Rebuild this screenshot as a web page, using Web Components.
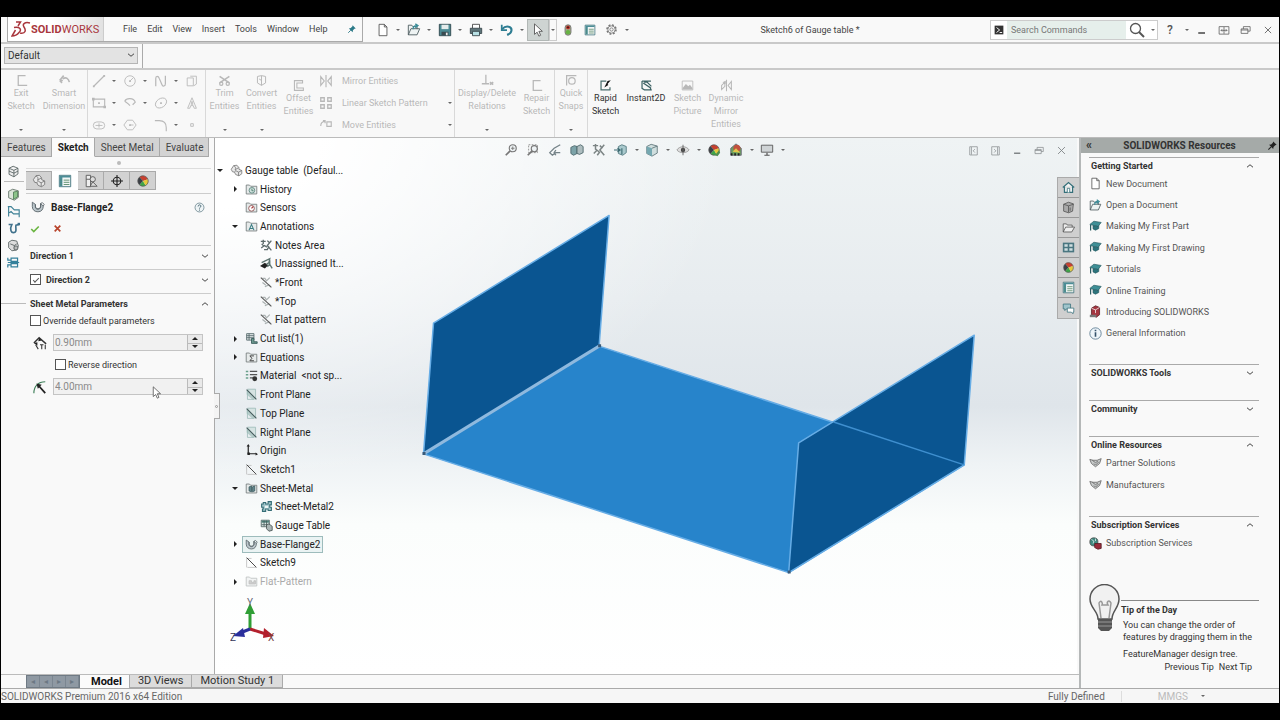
<!DOCTYPE html>
<html lang="en">
<head>
<meta charset="utf-8">
<title>SOLIDWORKS Premium 2016</title>
<style>
    html, body {
        height: 100%;
        margin: 0;
        background: #000;
        font-family: Roboto, "Open Sans", sans-serif;
        font-size: 9px;
        color: #444;
    }
</style>
</head>
<body>
<sw-app></sw-app>

<script>
const RESET = `
    :host { box-sizing: border-box; }
    *, *::before, *::after { box-sizing: border-box; }
    button, input, select { font: inherit; color: inherit; margin: 0; }
    button { background: none; border: 0; padding: 0; cursor: default; }
    a { color: inherit; text-decoration: none; }
    ul { list-style: none; margin: 0; padding: 0; }
    h2, h3, p { margin: 0; font-size: inherit; }
`;

const BALL = `
    <circle cx="8" cy="8" r="6" fill="#ddd"/>
    <path d="M8 8L4 3.5A6 6 0 0 1 13.6 6z" fill="#c8402f"/>
    <path d="M8 8L4 3.5A6 6 0 0 0 4 12.5z" fill="#3b3f45"/>
    <path d="M8 8L4 12.5A6 6 0 0 0 11 13.2z" fill="#3fa548"/>
    <path d="M8 8l5.6-2A6 6 0 0 1 11 13.2z" fill="#e7c93b"/>
    <circle cx="8" cy="8" r="6" fill="none" stroke="#555" stroke-width=".8"/>`;
const FOLDER = `<path d="M1.5 13.5v-11h4l1.500 1.500h7.500v9.500z" fill="#e6eaea" stroke="#707878"/>`;
const PART = `
    <path d="M1.500 6.500l3-4.500 4-.5 2.500 3v2l3.500 1.500v4l-3.500 2.500-4-1.500-1.500-3-2.500-.5z" fill="#e8e8e8" stroke="#777"/>
    <path d="M4.500 2c2 1 3 3 2 5l4-2.500M6.500 7c1 1 0 2-1 3M14.500 8l-4 2-3-1.500M10.500 10v4.500" fill="none" stroke="#777"/>`;
const FLANGE = `
    <path d="M1.500 2.500v5c0 4 3 6 6.500 6 4 0 6-3 6-6.500l-3-3v3c0 2-1.500 3-3 3s-3-1-3-3V5z" fill="#bcc7cc" stroke="#596469"/>
    <path d="M5 5v3c0 3 5 4 6 0V4M11 4l2-1 2 2-1 2" fill="none" stroke="#596469"/>`;
const GRAD = `
    <path d="M1 5.500l5-4 9 1.500-4 5z" fill="#3f8f96" stroke="#20555c" stroke-width=".8"/>
    <path d="M5 7v4l3 1.500 4-2V7l-1 1z" fill="#2c747c" stroke="#20555c" stroke-width=".8"/>
    <path d="M2 6v7" stroke="#20555c" stroke-width="1.400"/>`;
const PLANE = `<path d="M2 2h2l9 9v3H9L2 8z" fill="#b5ccca"/><path d="M3 1.500h10v12" fill="#d5e3e2" stroke="#9dbab8"/><path d="M3 4v10h8" fill="none" stroke="#9dbab8"/><path d="M2 2l12 12" stroke="#44595b" stroke-width="1.300"/>`;
const VIEW = `<path d="M3 3h3l2 3 4-4M3 8l4 3M6 13l5-2 2 2" fill="none" stroke="#aab1b1" stroke-width="1.500"/><path d="M1 2l13 12" stroke="#555" stroke-width="1.300"/>`;
const SHAKE = `<path d="M1 3l4 1h5l5-2-2 6-5 4-5-4z" fill="#c9cccc" stroke="#666"/><path d="M4 4l4 3 3-2M6 8l2 2 4-4" fill="none" stroke="#666"/>`;

const ICONS = {
    pin: `<path d="M9 2l5 5-2 .5-2.500 2.500-.5 3L3 7l3-.5L8.500 4z" fill="currentColor"/><path d="M6 10l-4 4" stroke="currentColor" stroke-width="1.500"/>`,
    new: `<path d="M3.500 1.500h6l3 3v10h-9z M9.500 1.500v3h3" fill="#fff" stroke="#555"/>`,
    open: `<path d="M1.500 13.500v-11h4l1 1.500h5v3M1.500 13.500l3-7h10l-3 7z" fill="#eef3f3" stroke="#4c5a5e"/><path d="M7 7c0-3 2-4 4-4M9.500 1l3 2-3 2.500" fill="none" stroke="#3b8c98" stroke-width="1.500"/>`,
    save: `<path d="M1.500 1.500h13v13h-13z" fill="#4a8a93" stroke="#2d4549"/><path d="M4 2h8v5H4z" fill="#e4ecec"/><path d="M4 10h8v4H4z" fill="#394b50"/><path d="M9 11h2v3H9z" fill="#eee"/>`,
    print: `<path d="M4 6V1.500h8V6" fill="#fff" stroke="#444"/><path d="M1.500 6h13v6h-13z" fill="#5e757a" stroke="#37464a"/><path d="M4 9.500h8v5H4z" fill="#b8e0e4" stroke="#37464a"/>`,
    undo: `<path d="M2 2v6h6" fill="none" stroke="#2e7d92" stroke-width="2"/><path d="M2.500 7C7 2 14 4 13 9c-.5 3-3 4-5 4.500" fill="none" stroke="#2e7d92" stroke-width="2.400"/>`,
    cursor: `<path d="M4 1v12l3-2.500L9 15l2-1-2-4.500h4z" fill="#fff" stroke="#555"/>`,
    traffic: `<rect x="4" y="1" width="8" height="14" rx="4" fill="#a5a78c" stroke="#666"/><circle cx="8" cy="4.500" r="2.500" fill="#c33128"/><path d="M6.500 3.500h3v2h-3z" fill="#511"/><circle cx="8" cy="11" r="3" fill="#67b344"/>`,
    list: `<path d="M1.500 1.500h13v13h-13z" fill="#f2f6f6" stroke="#3a6f78"/><path d="M2 2h12v2H2zM2 4h3v10H2z" fill="#4b8d96"/><path d="M6.500 7H13M6.500 9.500H13M6.500 12H13M3 7h1M3 9.500h1M3 12h1" stroke="#586"/>`,
    gear: `<circle cx="8" cy="8" r="5.500" fill="none" stroke="#777" stroke-width="2" stroke-dasharray="2.400 1.900"/><circle cx="8" cy="8" r="4.500" fill="#f7f7f7" stroke="#777"/><circle cx="8" cy="8" r="2" fill="none" stroke="#777"/>`,
    prompt: `<path d="M1 1h14v14H1z" fill="#333"/><path d="M4 4l5 4-5 4M9 12h4" fill="none" stroke="#fff" stroke-width="1.500"/>`,
    search: `<circle cx="6.500" cy="6.500" r="5" fill="none" stroke="#555" stroke-width="1.300"/><path d="M10 10l5 5" stroke="#555" stroke-width="2"/>`,
    min: `<path d="M3 12h9" stroke="currentColor" stroke-width="2.200"/>`,
    span: `<path d="M1.500 3.500h13v10h-13zM8 4v9M4 8.500h8M5.500 7L4 8.500 5.500 10M10.500 7L12 8.500 10.500 10" fill="none" stroke="currentColor"/>`,
    restore: `<path d="M1.500 6.500h9v6h-9zM4.500 6.500v-3h9v6h-3M1.500 8h9" fill="none" stroke="currentColor"/>`,
    close: `<path d="M3 3l10 10M13 3L3 13" stroke="currentColor" stroke-width="1.300"/>`,
    paneL: `<path d="M2.500 2.500h11v12h-11z M5 3v11 M10 6l-2.500 2.500L10 11" fill="none" stroke="currentColor"/>`,
    paneR: `<path d="M2.500 2.500h11v12h-11z M11 3v11 M6 6l2.500 2.500L6 11" fill="none" stroke="currentColor"/>`,
    up: `<path d="M2 10.500l6-5 6 5" fill="none" stroke="#444" stroke-width="2"/>`,
    down: `<path d="M2 5.500l6 5 6-5" fill="none" stroke="#444" stroke-width="2"/>`,
    // sketch ribbon
    exitSketch: `<path d="M13 2H4v12h11M4 8V2" fill="none" stroke="currentColor" stroke-width="1.600"/>`,
    dimension: `<path d="M2 8l5-6M2 8l3 3M6 6c4-3 7 0 8 4M2 8h4" fill="none" stroke="currentColor" stroke-width="2"/>`,
    line: `<path d="M2 14L14 2" stroke="currentColor" stroke-width="1.400"/><path d="M1 13h2v2H1zM13 1h2v2h-2z" fill="currentColor"/>`,
    circle: `<circle cx="8" cy="8" r="6" fill="none" stroke="currentColor"/><path d="M7 7h2v2H7z" fill="currentColor"/><path d="M8 8l4-4" stroke="currentColor"/>`,
    spline: `<path d="M2 14V5c0-3 3-3 4 0l3 7c1 3 4 2 4-1V2" fill="none" stroke="currentColor" stroke-width="1.400"/>`,
    plane: `<path d="M2.500 4.500h7v9h-7zM6 2.500h7v9l-3 2" fill="none" stroke="currentColor"/>`,
    rect: `<path d="M1.500 3.500h13v9h-13z" fill="none" stroke="currentColor" stroke-width="1.300"/><path d="M7 7h2v2H7zM0 2h3v3H0zM13 11h3v3h-3z" fill="currentColor"/>`,
    arc: `<path d="M2 6c2-4 10-4 12 1l-3 3M2 6l4 3 2 2" fill="none" stroke="currentColor" stroke-width="1.400"/>`,
    ellipse: `<ellipse cx="8" cy="8" rx="7" ry="5" transform="rotate(-35 8 8)" fill="none" stroke="currentColor"/><path d="M7 7h2v2H7z" fill="currentColor"/>`,
    letter: `<path d="M3 14L8 2l5 12h-2.500L9.500 11h-3L5.500 14zM8 6L7 9.500h2z" fill="none" stroke="currentColor"/>`,
    slot: `<rect x="1.500" y="4.500" width="13" height="8" rx="4" fill="none" stroke="currentColor"/><path d="M4 8.500h8M8 6v5" stroke="currentColor"/>`,
    polygon: `<path d="M5 2.500h6l4 5.500-4 5.500H5L1 8z" fill="none" stroke="currentColor"/><path d="M7 7h2v2H7z" fill="currentColor"/><path d="M8 8h4" stroke="currentColor"/>`,
    fillet: `<path d="M1 3h5c5 0 8 3 8 8v4" fill="none" stroke="currentColor" stroke-width="1.300"/>`,
    point: `<path d="M6.500 6.500h3v3h-3z" fill="none" stroke="currentColor"/>`,
    trim: `<path d="M2 3l12 8M14 3L2 11" stroke="currentColor" stroke-width="2"/><circle cx="4" cy="12" r="2" fill="none" stroke="currentColor" stroke-width="1.500"/><circle cx="12" cy="12" r="2" fill="none" stroke="currentColor" stroke-width="1.500"/>`,
    convert: `<path d="M3 3l5-1 5 1v8l-5 3-5-3zM8 2v12M5 6l3 2" fill="none" stroke="currentColor" stroke-width="1.200"/>`,
    offset: `<path d="M13 2H3v12h11v-3H6V5h7z" fill="none" stroke="currentColor" stroke-width="1.300"/>`,
    mirror: `<path d="M8 1v14M2 3v10l4-5zM14 3v10l-4-5z" fill="none" stroke="currentColor" stroke-width="1.300"/>`,
    pattern: `<path d="M2 2h4v4H2zM10 2h4v4h-4zM2 10h4v4H2zM10 10h4v4h-4z" fill="none" stroke="currentColor" stroke-width="1.500"/>`,
    move: `<path d="M2 9c0-3 2-5 5-5M4.500 3H7v3M9 4.500h5v5H9z" fill="none" stroke="currentColor" stroke-width="1.300"/>`,
    relations: `<path d="M6 1v11M1 12h9" stroke="currentColor" stroke-width="1.600"/><path d="M11 10l4 3M11 13l4-3" stroke="currentColor" stroke-width="2"/>`,
    snaps: `<path d="M2 14V2h12" fill="none" stroke="currentColor" stroke-width="1.500"/><circle cx="8.500" cy="8.500" r="4" fill="none" stroke="currentColor" stroke-width="1.500"/>`,
    rapid: `<path d="M9 2.500H2.500v11h11V10" fill="none" stroke="#4a6d6d" stroke-width="1.500"/><path d="M14.500 1.500l-4 1-4 8 5-3-1-1.500z" fill="#111"/>`,
    instant: `<path d="M2.500 2.500h11M2.500 2.500v9l3 2h9M4 5l9 6v3M5 4h4l5 5" fill="none" stroke="#3d6264" stroke-width="1.500"/>`,
    picture: `<path d="M1.500 2.500h13v11h-13z" fill="none" stroke="currentColor"/><path d="M2 11l4-5 3 3 2-2 3 4v2H2z" fill="currentColor"/>`,
    dynamic: `<path d="M8 1v14M14 3v10l-4-5zM2 13V8l4-4v5z" fill="none" stroke="currentColor" stroke-width="1.300"/><path d="M3 4l4-2v4z" fill="currentColor"/>`,
    // property manager
    part: PART,
    config: `<path d="M2.500 1.500h5v13h-5zM2.500 6h5" fill="#eee" stroke="#555"/><circle cx="10" cy="6" r="3" fill="#ddd" stroke="#555"/><path d="M7 14l3-5 5 5z" fill="#ddd" stroke="#555"/>`,
    target: `<circle cx="8" cy="8" r="5" fill="none" stroke="#222" stroke-width="1.500"/><path d="M8 0v16M0 8h16" stroke="#222" stroke-width="1.500"/>`,
    ball: BALL,
    flange: FLANGE,
    help: `<circle cx="8" cy="8" r="6.500" fill="#eef4f6" stroke="#55727c"/><path d="M6 6.500c0-3 4-3 4-.5 0 2-2 1.500-2 3.500M8 11v1.500" fill="none" stroke="#3c5c68" stroke-width="1.300"/>`,
    ok: `<path d="M2 8l4 4 8-8" fill="none" stroke="#6ab541" stroke-width="2.600"/>`,
    cancel: `<path d="M3 3l10 10M13 3L3 13" stroke="#b8442c" stroke-width="3"/>`,
    thickness: `<path d="M1 8l6-6 8 7" fill="none" stroke="#333" stroke-width="1.600"/><path d="M1 8l4-1v4zM7 2l-1 4 4-1z" fill="#222"/><path d="M3 10l3 5M8 10h4M10 10v5M14 10v5" stroke="#333" stroke-width="1.200"/>`,
    radius: `<path d="M1 15C1 7 6 2 14 2" fill="none" stroke="#3d7f58" stroke-width="1.300"/><path d="M14 15L6 6" stroke="#222" stroke-width="2"/><path d="M4 4l6 1.500L5.500 10z" fill="#222"/>`,
    solid: `<path d="M2.500 4l5-2.500 6 2.500v7l-5 3.500-6-3z M2.500 4l6 2.500 5-2.500M8.500 6.500v8M2.500 7.500l6 2.500 5-2.500" fill="#ececec" stroke="#4f5b5b"/>`,
    boss: `<path d="M2 4l5-2.500 7 2v8L9 15l-7-3z" fill="#dbe5da" stroke="#5b6b60"/><path d="M8 5l5-1v7l-5 3z" fill="#8cc48a" stroke="#4b7a52"/>`,
    sheet: `<path d="M2 14V2M1 2h4l4 4h6v6M2 10l3-2 3 3h7M15 12v3" fill="none" stroke="#3f8196" stroke-width="1.400"/>`,
    curve: `<path d="M2 3h4c-3 6-1 11 3 10s1-6 2-9l4-1" fill="none" stroke="#40728c" stroke-width="2"/><path d="M13 1h3v3h-3z" fill="#40728c"/>`,
    mold: `<path d="M2 4l4-2.500 6 1 2 6-2 5-6 1-4-4z" fill="#ddd" stroke="#4f5959"/><path d="M4 6l5 2 3-2M9 8v5" fill="none" stroke="#4f5959"/><circle cx="11" cy="11" r="2.500" fill="#bbb" stroke="#4f5959"/>`,
    weld: `<path d="M1 2v3h4M5 2.500h8v4H5zM5 9.500h8v4H5zM1 8h14M1 14v-3h4" fill="none" stroke="#34809b" stroke-width="1.500"/>`,
    // feature tree
    history: FOLDER + `<circle cx="8.500" cy="9" r="3.500" fill="#cfe0dc" stroke="#55817a"/><path d="M8.500 7v2.500h2" fill="none" stroke="#476"/>`,
    sensors: FOLDER + `<circle cx="8" cy="9" r="3.500" fill="#fff" stroke="#844"/><path d="M8 9l2-2" stroke="#a33" stroke-width="1.500"/>`,
    annotations: FOLDER + `<path d="M5 12.500L8 5.500l3 7M6 10.500h4" fill="none" stroke="#3e7f86" stroke-width="1.300"/>`,
    notes: `<path d="M1 3h6M4 1v5M2 6l3 3M1.500 11l4-3 3 2M14 2l-5 6 5 6M5 13h4l2-4M9 2l3 3" fill="none" stroke="#5e6c6c" stroke-width="1.600"/>`,
    unassigned: `<path d="M0 11l6-4 4 3-4 4z" fill="#222"/><path d="M2 7l10-5-1 5-3 2M12 4v5l3 5M9 12l3-3" fill="none" stroke="#5f7672" stroke-width="1.700"/>`,
    view: VIEW,
    cutlist: `<path d="M2 2h9v8H2z" fill="#dfe6e6" stroke="#4f6466"/><path d="M2 4.500h9M5 2v8M2 7h9" stroke="#4f6466"/><path d="M8 8v6h7v-2h-4V8z" fill="#6c9b8f" stroke="#355"/>`,
    equations: FOLDER + `<path d="M11 6H6l2.500 3L6 12h5" fill="none" stroke="#444" stroke-width="1.200"/>`,
    material: `<path d="M6 3h9M6 7h9M6 11h4" stroke="#555" stroke-width="1.500"/><path d="M1 2h3v2H1zM1 6h3v2H1zM1 10h3v2H1z" fill="#6aa08c"/><circle cx="12" cy="12" r="3" fill="#333"/>`,
    planeRef: PLANE,
    origin: `<path d="M4 2v10h10" fill="none" stroke="#222" stroke-width="1.500"/><path d="M2 3l2-3 2 3zM3 10.500h3v3H3zM13 10.500l3 2-3 1.500z" fill="#222"/>`,
    sketch: `<path d="M2 14V3h6" fill="none" stroke="#bbb"/><path d="M2 2l12 12" stroke="#444" stroke-width="1.200"/><path d="M3 14h11" fill="none" stroke="#bbb"/>`,
    sheetFolder: FOLDER + `<path d="M5 6l3-1v7l-3-1zM9 6l3-1v6l-3 1z" fill="#62868c" stroke="#3d5d61"/>`,
    sheetMetal: `<path d="M4 3h3v2h3V2h4v4h-2v3h2v4h-4v-2H7v3H3v-3h1V9H2V5h2z" fill="#9fc4c9" stroke="#356d76" stroke-width="1.300"/><path d="M6 7h4v3H6z" fill="#eef5f5"/>`,
    gauge: `<path d="M1.500 1.500h10v8h-10z" fill="#dce6e4" stroke="#4a5e5e"/><path d="M2 2h9v2.500H2z" fill="#4c7f78"/><path d="M5 2v7M8 2v7M2 7h9" stroke="#4a5e5e"/><path d="M8 7l3-1 4 3v5l-4 1-3-3z" fill="#aab5b5" stroke="#454f4f"/>`,
    flat: `<g opacity=".45">${FOLDER}<path d="M5 7h3v2h3V7h2v4H5z" fill="#999" stroke="#777"/></g>`,
    // heads-up view toolbar
    zoomFit: `<circle cx="10" cy="6" r="4" fill="#edf2f4" stroke="#777" stroke-width="1.300"/><path d="M7 9l-5 5" stroke="#777" stroke-width="2"/><path d="M8 6h4M10 4v4" stroke="#777"/>`,
    zoomArea: `<path d="M3 2h10v9H3z" fill="none" stroke="#888" stroke-dasharray="2 1.500"/><circle cx="9.500" cy="6.500" r="3.500" fill="#edf2f4" stroke="#777" stroke-width="1.300"/><path d="M7 9l-5 5" stroke="#777" stroke-width="2"/>`,
    prev: `<path d="M14 2L7 6l-5 5 3 3 4-3h5M9 8l-2 3 2 3" fill="none" stroke="#758388" stroke-width="1.500"/>`,
    section: `<path d="M1 5l4-2 3 1v8l-4 2-3-2z" fill="#7ca3a8" stroke="#4c666a"/><path d="M8 4l4-2 3 2v7l-4 2-3-1z" fill="#aebdbf" stroke="#4c666a"/>`,
    sectionView: `<path d="M1 3h6M4 1v6l4 3M2 12l4-4M14 2L9 8l5 6M6 14l3-4M9 3l3 3" fill="none" stroke="#7b8484" stroke-width="1.700"/>`,
    orient: `<path d="M5 4l4-2 5 2v7l-4 3-5-2z" fill="#a9c9cd" stroke="#557a80"/><path d="M0 8h6M4 6l3 2-3 2M9 6v7" fill="none" stroke="#3d6b73" stroke-width="1.300"/>`,
    cube: `<path d="M2 4l5-2.500 7 2v8L8 15l-6-3z" fill="#cfdede" stroke="#61777b"/><path d="M2 4l6 2v9l-6-3z" fill="#75a8b1"/><path d="M8 6l6-2.500" stroke="#61777b"/>`,
    eye: `<path d="M1 8c3-5 11-5 14 0-3 4-11 4-14 0z" fill="#ddd" stroke="#999"/><circle cx="8" cy="8" r="2.500" fill="#444"/><path d="M8 2v12" stroke="#666"/>`,
    appearance: BALL + `<path d="M9 14l5-6 1 3-3 4z" fill="#518f4e"/>`,
    scene: `<path d="M2 14V6l6-5 6 5v8z" fill="#6a9f5e" stroke="#667"/><circle cx="9" cy="6" r="4" fill="#c2503e"/><path d="M4 10l4-4 5 5" fill="#e1c54b"/><path d="M2 13h12" stroke="#222" stroke-width="2.500" stroke-dasharray="2 2"/>`,
    monitor: `<path d="M1.500 2.500h13v8h-13z" fill="#cfd4d6" stroke="#555"/><path d="M8 11v3M5 14h6" stroke="#555" stroke-width="1.400"/>`,
    // task pane
    home: `<path d="M1 8l7-6 7 6M3 7v7h10V7" fill="#f4f4f4" stroke="#35707a" stroke-width="1.500"/><path d="M6.500 14V9h3v5" fill="#fff" stroke="#35707a"/>`,
    library: `<path d="M2 4l6-2.500 6 2-1 9-5 2-6-2z" fill="#aaa" stroke="#555"/><path d="M8 6l6-2M8 6v8M2 4l6 2M10 8v4" stroke="#555"/>`,
    folder: `<path d="M1.500 13.500v-10h4l1 1.500h6v2.500M1.500 13.500l3-6h11l-3.500 6z" fill="#eee" stroke="#555"/>`,
    palette: `<path d="M1 2h14v12H1z" fill="#4a7680"/><path d="M3 4h4v3H3zM9 4h4v3H9zM3 9h4v3H3zM9 9h4v3H9z" fill="#cfdee0"/>`,
    forum: `<path d="M1.500 2.500h9v6h-5l-2 2v-2h-2z" fill="#9fc4cb" stroke="#3d747f"/><path d="M6.500 7.500h8v5h-1v2l-2-2h-5z" fill="#fff" stroke="#3d747f"/>`,
    grad: GRAD,
    intro: `<path d="M3 4l5-3 5 2v9l-4 3-6-3z" fill="#a53540" stroke="#5d2228"/><path d="M3 4l5 2 5-3M8 6v4" fill="none" stroke="#eee"/><path d="M1 12h8v3H1z" fill="#777"/>`,
    info: `<circle cx="8" cy="8" r="7" fill="#eef5fa" stroke="#52748b"/><path d="M8 6.500V12M8 3.500v1.800" stroke="#35526b" stroke-width="2"/>`,
    shake: SHAKE,
    subscription: `<circle cx="6" cy="6" r="5" fill="#3f8a80" stroke="#555"/><path d="M3 3l3 2-1 3M8 2v3" stroke="#dfe8e8" fill="none"/><path d="M7 8h8v6l-4 1-4-2z" fill="#992b3a" stroke="#541c24"/>`
};

class SwIcon extends HTMLElement {
    connectedCallback() {
        if (this.shadowRoot) return;
        const size = this.getAttribute('size') || 14;
        this.attachShadow({ mode: 'open' }).innerHTML = `
            <style>
                :host { display: inline-block; flex: none; width: ${size}px; height: ${size}px; }
                svg { display: block; width: 100%; height: 100%; }
            </style>
            <svg viewBox="0 0 16 16" aria-hidden="true">${ICONS[this.getAttribute('name')] || ''}</svg>`;
    }
}
customElements.define('sw-icon', SwIcon);

const define = (tag, render) => customElements.define(tag, class extends HTMLElement {
    connectedCallback() {
        if (this.shadowRoot) return;
        this.attachShadow({ mode: 'open' }).innerHTML = `<style>${RESET}</style>` + render(this);
    }
});

const icon = (name, size) => `<sw-icon name="${name}" size="${size || 14}"></sw-icon>`;

// small drop-down marker beside an icon
define('sw-caret', () => `
    <style>
        :host { display: inline-grid; place-items: center; flex: none; width: 9px; }
        i { border: 2px solid transparent; border-top-color: #666; border-bottom: 0; }
    </style>
    <i></i>`);

define('sw-menubar', () => `
    <style>
        :host { display: flex; align-items: stretch; height: 27px; background: #f9f9f9; border-bottom: 2px solid #c9c9c9; }
        .brand {
            display: flex; margin-left: 6px; border: solid #aaa; border-width: 0 1px 1px;
        }
        .logo {
            display: flex; align-items: center; width: 96px; padding-left: 3px;
            background: linear-gradient(100deg, #fff 45%, #e0e0e0); border-right: 1px solid #ccc;
            color: #a9363d; font-size: 11px;
        }
        .logo svg { width: 20px; height: 18px; }
        nav { display: flex; align-items: center; gap: 10px; padding: 0 5px 0 19px; }
        nav sw-icon { color: #2c7a88; margin-left: 9px; }
        .quick { display: flex; align-items: center; padding-left: 9px; }
        .quick button, .controls button { display: grid; place-items: center; width: 22px; height: 22px; }
        .quick .active { background: #ced4d2; border: 1px solid #b2b8b6; }
        .quick .active + sw-caret { width: 8px; height: 22px; border: 1px solid #ccc; }
        .title { flex: 1; padding: 0 16px 0 129px; align-self: center; white-space: nowrap; }
        .search {
            display: flex; align-items: center; align-self: center; width: 168px; height: 20px;
            border: 1px solid #ccc; background: #fff;
        }
        .search sw-icon { margin: 0 3px; }
        input { flex: 1; min-width: 0; height: 18px; border: 0; padding: 0 4px; background: #e6efeb; }
        input::placeholder { color: #777; opacity: 1; }
        .controls { display: flex; align-items: center; color: #555; }
        .controls .q { width: 24px; font-size: 12px; font-weight: 500; }
    </style>
    <div class="brand">
        <div class="logo">
            <svg viewBox="0 0 20 18" fill="none" stroke="#a9363d" stroke-width="1.500" aria-hidden="true">
                <path d="M5 2h4.500L7 6M3 7.500c6-1 8 2 5 5C6 15 3 16 1 16l3.500-6M19 3c-5-1.500-8 1-6 4s2 7-4 6"/>
            </svg>
            <span><b>SOLID</b>WORKS</span>
        </div>
        <nav>
            ${['File', 'Edit', 'View', 'Insert', 'Tools', 'Window', 'Help'].map(t => `<button>${t}</button>`).join('')}
            ${icon('pin', 10)}
        </nav>
    </div>
    <div class="quick">
        ${['new', 'open', 'save', 'print', 'undo'].map(n => `<button aria-label="${n}">${icon(n)}</button><sw-caret></sw-caret>`).join('')}
        <button class="active" aria-label="select">${icon('cursor')}</button><sw-caret></sw-caret>
        <button aria-label="rebuild">${icon('traffic', 12)}</button>
        <button aria-label="properties">${icon('list', 12)}</button>
        <button aria-label="options">${icon('gear', 13)}</button><sw-caret></sw-caret>
    </div>
    <div class="title">Sketch6 of Gauge table *</div>
    <div class="search">
        ${icon('prompt', 10)}
        <input type="text" placeholder="Search Commands" aria-label="Search Commands">
        ${icon('search', 16)}<sw-caret></sw-caret>
    </div>
    <div class="controls">
        <button class="q">?</button><sw-caret></sw-caret>
        <button aria-label="minimize">${icon('min', 12)}</button>
        <button aria-label="span">${icon('span', 12)}</button>
        <button aria-label="restore">${icon('restore', 12)}</button>
        <button aria-label="close">${icon('close', 10)}</button>
    </div>`);

define('sw-configbar', () => `
    <style>
        :host { display: flex; height: 26px; background: #f8f8f8; border-bottom: 2px solid #c9c9c9; }
        div { position: relative; display: flex; align-items: center; width: 142px; padding: 0 0 2px 3px; border-right: 1px solid #aaa; }
        select { appearance: none; width: 134px; height: 17px; padding: 0 3px; border: 1px solid #b5b5b5; border-radius: 0; background: #e3e3e3; font-size: 10px; color: #333; }
        sw-icon { position: absolute; right: 7px; }
    </style>
    <div><select aria-label="Configuration"><option>Default</option></select>${icon('down', 8)}</div>`);

// ribbon button: icon above a label of one or more lines
define('sw-tool', el => `
    <style>
        :host { display: block; flex: none; }
        button { display: flex; flex-direction: column; align-items: center; width: 100%; height: 100%; line-height: 13px; text-align: center; }
        :host([low]) button { padding-top: 5px; }
        sw-caret { margin-top: auto; height: 14px; }
    </style>
    <button>${icon(el.getAttribute('icon'), 13)}<span><slot></slot></span>${el.hasAttribute('menu') ? '<sw-caret></sw-caret>' : ''}</button>`);

define('sw-ribbon', () => {
    const small = ['line', 'circle', 'spline', 'plane', 'rect', 'arc', 'ellipse', 'letter', 'slot', 'polygon', 'fillet', 'point'];
    const noCaret = [3, 7, 9, 11];
    return `
    <style>
        :host { display: flex; height: 68px; background: #f8f8f8; border-bottom: 1px solid #bbb; color: #b8b8b8; }
        .group { display: flex; padding-top: 4px; border-right: 1px solid #d9d9d9; }
        .group:last-child { border: 0; }
        .live { color: #333; }
        .w32 { width: 32px; } .w35 { width: 35px; } .w37 { width: 37px; } .w40 { width: 40px; } .w46 { width: 46px; } .w64 { width: 64px; }
        .grid { display: grid; grid-template-columns: 31px 31px 31px 24px; grid-auto-rows: 22px; padding-top: 0; }
        .grid span { display: flex; align-items: center; padding-left: 4px; }
        .grid sw-caret { margin-left: 3px; }
        .grid button { display: grid; }
        .list { display: grid; grid-auto-rows: 22px; width: 137px; margin-top: -4px; padding-left: 2px; }
        .list div { display: flex; align-items: center; }
        .list button { display: flex; align-items: center; gap: 9px; flex: 1; }
    </style>
    <div class="group">
        <sw-tool class="w40" icon="exitSketch" menu>Exit<br>Sketch</sw-tool>
        <sw-tool class="w46" icon="dimension" menu>Smart<br>Dimension</sw-tool>
    </div>
    <div class="group grid">
        ${small.map((n, i) => `<span><button aria-label="${n}">${icon(n)}</button>${noCaret.includes(i) ? '' : '<sw-caret></sw-caret>'}</span>`).join('')}
    </div>
    <div class="group">
        <sw-tool class="w37" icon="trim" menu>Trim<br>Entities</sw-tool>
        <sw-tool class="w37" icon="convert" menu>Convert<br>Entities</sw-tool>
        <sw-tool class="w37" icon="offset" low>Offset<br>Entities</sw-tool>
        <div class="list">
            <div><button>${icon('mirror')}Mirror Entities</button></div>
            <div><button>${icon('pattern')}Linear Sketch Pattern</button><sw-caret></sw-caret></div>
            <div><button>${icon('move')}Move Entities</button><sw-caret></sw-caret></div>
        </div>
    </div>
    <div class="group">
        <sw-tool class="w64" icon="relations" menu>Display/Delete<br>Relations</sw-tool>
        <sw-tool class="w35" icon="exitSketch" low>Repair<br>Sketch</sw-tool>
    </div>
    <div class="group"><sw-tool class="w32" icon="snaps" menu>Quick<br>Snaps</sw-tool></div>
    <div class="group">
        <sw-tool class="w35 live" icon="rapid" low>Rapid<br>Sketch</sw-tool>
        <sw-tool class="w46 live" icon="instant" low>Instant2D</sw-tool>
        <sw-tool class="w37" icon="picture" low>Sketch<br>Picture</sw-tool>
        <sw-tool class="w40" icon="dynamic" low>Dynamic<br>Mirror<br>Entities</sw-tool>
    </div>`;
});

define('sw-command-tabs', () => `
    <style>
        :host { display: flex; height: 19px; font-size: 10px; }
        button { padding: 0 5px 0 6px; background: #d3d3d3; border: solid #a8a8a8; border-width: 0 1px 1px 0; }
        button:first-child { padding-left: 5px; }
        button[aria-selected=true] { background: #fbfbfb; border-bottom-color: #fbfbfb; font-weight: 700; color: #222; }
    </style>
    ${['Features', 'Sketch', 'Sheet Metal', 'Evaluate'].map(t => `<button role="tab" aria-selected="${t === 'Sketch'}">${t}</button>`).join('')}`);

define('sw-spin', el => `
    <style>
        :host { display: flex; width: 150px; height: 17px; border: 1px solid #c4c4c4; background: #f1f1f1; }
        input { flex: 1; min-width: 0; padding: 0 1px; border: 0; background: none; color: #8a8a8a; font-size: 10px; }
        div { display: grid; grid-template-rows: 1fr 1fr; width: 15px; border-left: 1px solid #bbb; }
        button { display: grid; place-items: center; background: #e9e9e9; }
        button + button { border-top: 1px solid #bbb; }
        i { border: 3px solid transparent; border-width: 0 3px 3px; border-bottom-color: #222; }
        button + button i { transform: rotate(180deg); }
    </style>
    <input type="text" disabled value="${el.getAttribute('value')}" aria-label="${el.getAttribute('label')}">
    <div><button aria-label="increase"><i></i></button><button aria-label="decrease"><i></i></button></div>`);

define('sw-check', el => `
    <style>
        :host { display: inline-flex; }
        label { display: flex; align-items: center; gap: 2px; }
        input { appearance: none; display: grid; place-items: center; width: 11px; height: 11px; border: 1px solid #555; background: #fff; }
        input:checked::after { content: ''; width: 6px; height: 3px; border: solid #555; border-width: 0 0 1px 1px; transform: rotate(-45deg); }
        :host([spaced]) label { gap: 5px; }
    </style>
    <label><input type="checkbox" ${el.hasAttribute('checked') ? 'checked' : ''}><slot></slot></label>`);

define('sw-property-manager', () => `
    <style>
        :host { display: grid; grid-template-columns: 25px 1fr; padding-right: 3px; color: #333; }
        .strip { display: flex; flex-direction: column; align-items: center; gap: 4px; height: 147px; padding-top: 8px; border-bottom: 1px solid #bbb; }
        .strip hr { width: 20px; margin: -1px 0 2px; border: 0; border-top: 1px solid #bbb; }
        .grip { height: 12px; border-bottom: 1px solid #ddd; display: grid; place-items: center; }
        .grip i { width: 4px; height: 4px; border-radius: 50%; background: #bbb; }
        .tabs { display: flex; height: 25px; padding-top: 2px; border-bottom: 1px solid #ccc; }
        .tabs button { display: grid; place-items: center; width: 26px; height: 19px; background: #d2d2d2; border: solid #aaa; border-width: 1px 1px 1px 0; }
        .tabs .on { background: #fff; border-color: #fff; }
        .head { display: flex; align-items: center; gap: 6px; height: 26px; padding: 0 6px 0 5px; font-size: 10px; }
        .head h2 { flex: 1; color: #222; }
        .actions { display: flex; gap: 13px; height: 25px; padding: 4px 0 0 4px; align-items: start; }
        section { border-top: 1px solid #ccc; margin-left: 3px; }
        h3 { display: flex; justify-content: space-between; align-items: center; height: 23px; padding: 0 2px 4px 1px; }
        .rows { display: grid; justify-items: start; gap: 8px; padding-left: 1px; margin-top: -2px; }
        .row { position: relative; display: flex; align-items: center; gap: 6px; height: 17px; padding-left: 3px; }
        .in { padding-left: 25px; }
        .row .pointer { position: absolute; left: 120px; top: 8px; }
    </style>
    <div class="strip">
        ${icon('solid', 13)}<hr>${['boss', 'sheet', 'curve', 'mold', 'weld'].map(n => icon(n, 13)).join('')}
    </div>
    <div>
        <div class="grip"><i></i></div>
        <div class="tabs">
            <button aria-label="Features">${icon('part')}</button>
            <button aria-label="Properties" class="on">${icon('list')}</button>
            <button aria-label="Configurations">${icon('config')}</button>
            <button aria-label="Dimensions">${icon('target', 12)}</button>
            <button aria-label="Display">${icon('ball')}</button>
        </div>
        <div class="head">${icon('flange')}<h2>Base-Flange2</h2>${icon('help', 11)}</div>
        <div class="actions"><button aria-label="OK">${icon('ok', 10)}</button><button aria-label="Cancel">${icon('cancel', 9)}</button></div>
        <section><h3>Direction 1 ${icon('down', 8)}</h3></section>
        <section><h3><sw-check checked spaced>Direction 2</sw-check>${icon('down', 8)}</h3></section>
        <section>
            <h3>Sheet Metal Parameters ${icon('up', 8)}</h3>
            <div class="rows">
                <sw-check>Override default parameters</sw-check>
                <div class="row">${icon('thickness')}<sw-spin value="0.90mm" label="Thickness"></sw-spin></div>
                <sw-check class="in">Reverse direction</sw-check>
                <div class="row">${icon('radius')}<sw-spin value="4.00mm" label="Bend radius"></sw-spin><span class="pointer">${icon('cursor', 13)}</span></div>
            </div>
        </section>
    </div>`);

// [level, arrow, icon, text]
const TREE = [
    [0, 'open', 'part', 'Gauge table&nbsp; (Defaul...'],
    [1, 'shut', 'history', 'History'],
    [1, '', 'sensors', 'Sensors'],
    [1, 'open', 'annotations', 'Annotations'],
    [2, '', 'notes', 'Notes Area'],
    [2, '', 'unassigned', 'Unassigned It...'],
    [2, '', 'view', '*Front'],
    [2, '', 'view', '*Top'],
    [2, '', 'view', 'Flat pattern'],
    [1, 'shut', 'cutlist', 'Cut list(1)'],
    [1, 'shut', 'equations', 'Equations'],
    [1, '', 'material', 'Material&nbsp; &lt;not sp...'],
    [1, '', 'planeRef', 'Front Plane'],
    [1, '', 'planeRef', 'Top Plane'],
    [1, '', 'planeRef', 'Right Plane'],
    [1, '', 'origin', 'Origin'],
    [1, '', 'sketch', 'Sketch1'],
    [1, 'open', 'sheetFolder', 'Sheet-Metal'],
    [2, '', 'sheetMetal', 'Sheet-Metal2'],
    [2, '', 'gauge', 'Gauge Table'],
    [1, 'shut', 'flange', 'Base-Flange2'],
    [1, '', 'sketch', 'Sketch9'],
    [1, 'shut', 'flat', 'Flat-Pattern']
];

define('sw-tree', () => `
    <style>
        :host { display: block; font-size: 10px; color: #222; }
        ul { display: grid; grid-auto-rows: 1fr; height: 430px; }
        li { display: flex; align-items: center; white-space: nowrap; }
        .l1 { padding-left: 15px; }
        .l2 { padding-left: 30px; }
        i { width: 10px; display: grid; place-items: center; }
        .open::before { content: ''; border: 3px solid transparent; border-top-color: #222; border-bottom: 0; }
        .shut::before { content: ''; border: 3px solid transparent; border-left-color: #222; border-right: 0; }
        span { display: flex; align-items: center; gap: 2px; margin-left: 2px; padding: 1px 2px; border: 1px solid transparent; }
        .picked span { border-color: #9dbcbc; background: #eaf3f3; }
        .dim span { color: #aaa; }
    </style>
    <ul>${TREE.map(([level, arrow, name, text]) => {
        const state = text === 'Base-Flange2' ? 'picked' : text === 'Flat-Pattern' ? 'dim' : '';
        return `<li class="l${level} ${state}"><i class="${arrow}"></i><span>${icon(name, 13)}${text}</span></li>`;
    }).join('')}</ul>`);

define('sw-viewport', () => {
    const tools = ['zoomFit', 'zoomArea', 'prev', 'section', 'sectionView', 'orient+', 'cube+', 'eye+', 'appearance', 'scene+', 'monitor+'];
    return `
    <style>
        :host {
            position: relative; display: block; overflow: hidden; border-left: 1px solid #aaa;
            background:
                radial-gradient(ellipse 60% 65% at 0 0, #fff 20%, rgba(255,255,255,0)),
                linear-gradient(180deg, #eff3f4 0, #e7ecef 30%, #dfe5ea 50%, #eff3f5 61%, #fbfdfc 72%, #fff 100%);
        }
        .scene { position: absolute; inset: 0; width: 100%; height: 100%; }
        .bar { position: relative; display: grid; grid-template-columns: 1fr auto 1fr; align-items: center; height: 24px; padding-right: 5px; }
        .tools, .win { display: flex; }
        .tools { grid-column: 2; }
        .win { justify-content: end; color: #808587; }
        button { display: grid; place-items: center; width: 22px; height: 22px; }
        sw-tree { position: relative; margin-top: -1px; }
        .triad { position: relative; display: block; width: 46px; height: 46px; margin: 6px 0 0 15px; font-size: 10px; }
    </style>
    <svg class="scene" viewBox="214 138 864 536" aria-hidden="true">
        <g stroke="#67ade6" stroke-width="1.500" stroke-linejoin="round">
            <path d="M423 454L599 346 965 465 789 573z" fill="#2784cb"/>
            <path d="M433 323L609 215 599 346 423 454z" fill="#0a5591"/>
            <path d="M799 443L975 335 965 465 789 573z" fill="#0a5591"/>
            <path d="M834 422L965 465" stroke="#3f8fcf"/>
        </g>
        <path d="M423 454L599 346" stroke="#8fb9de" stroke-width="3"/>
        <path d="M422 452h3v3h-3zM598 344h3v3h-3zM788 571h3v3h-3z" fill="#3a5a78"/>
    </svg>
    <div class="bar">
        <div class="tools">${tools.map(t => {
            const name = t.replace('+', '');
            return `<button aria-label="${name}">${icon(name)}</button>${t.endsWith('+') ? '<sw-caret></sw-caret>' : ''}`;
        }).join('')}</div>
        <div class="win">${['paneL', 'paneR', 'min', 'restore', 'close'].map(n => `<button aria-label="${n}">${icon(n, 11)}</button>`).join('')}</div>
    </div>
    <sw-tree></sw-tree>
    <svg class="triad" viewBox="0 0 46 46">
        <path d="M20 32V15" stroke="#2f9e35" stroke-width="3"/><path d="M15 17l5-11 5 11z" fill="#2f9e35"/>
        <path d="M20 32l16 5" stroke="#b3202c" stroke-width="3"/><path d="M34 31l10 8-11 2z" fill="#b3202c"/>
        <path d="M20 32l-10 4" stroke="#2a2f9c" stroke-width="3"/><path d="M13 31L3 39l12 1z" fill="#2a2f9c"/>
        <text x="17" y="9" fill="#667">Y</text><text x="38" y="44" fill="#744">X</text><text x="0" y="44" fill="#335">Z</text>
    </svg>`;
});

define('sw-section', el => `
    <style>
        :host { display: block; border-top: 1px solid #aaa; margin-bottom: 20px; }
        h3 { display: flex; justify-content: space-between; align-items: center; height: 15px; padding: 0 5px 0 2px; color: #333; }
        ::slotted(ul) { display: grid; grid-auto-rows: 1fr; list-style: none; margin: 0; padding: 0 0 0 1px; }
    </style>
    <h3>${el.getAttribute('heading')} ${icon(el.hasAttribute('closed') ? 'down' : 'up', 8)}</h3>
    <slot></slot>`);

define('sw-resources', () => {
    const links = rows => rows.map(([n, t]) => `<li><a href="#">${icon(n, 13)}${t}</a></li>`).join('');
    return `
    <style>
        :host { display: block; background: #f9f9f9; border-left: 2px solid #b5b8b8; color: #555; }
        header { display: flex; align-items: center; height: 15px; padding: 0 1px 0 5px; background: #a5aaa8; color: #333; font-size: 10px; font-weight: 700; }
        header button { font-size: 12px; line-height: 12px; padding-bottom: 2px; }
        header h2 { flex: 1; text-align: center; }
        header sw-icon { color: #222; }
        .body { padding: 4px 20px 0 8px; }
        li { display: flex; align-items: center; min-height: 22px; }
        .long { height: 171px; }
        .long li { min-height: 0; }
        a { display: flex; align-items: center; gap: 4px; }
        .tip { display: flex; gap: 1px; padding-top: 10px; color: #333; line-height: 12px; }
        .tip > svg { flex: none; width: 31px; height: 48px; }
        .tip > div { flex: 1; margin-top: 16px; padding-top: 3px; border-top: 1px solid #888; }
        .tip p { padding-left: 2px; margin-top: 3px; white-space: nowrap; }
        .tip p + p { margin-top: 5px; }
        .more { display: flex; justify-content: end; gap: 5px; margin: 1px 7px 0 0; }
    </style>
    <header><button aria-label="Collapse">«</button><h2>SOLIDWORKS Resources</h2>${icon('pin', 11)}</header>
    <div class="body">
        <sw-section heading="Getting Started"><ul class="long">${links([
            ['new', 'New Document'], ['open', 'Open a Document'], ['grad', 'Making My First Part'],
            ['grad', 'Making My First Drawing'], ['grad', 'Tutorials'], ['grad', 'Online Training'],
            ['intro', 'Introducing SOLIDWORKS'], ['info', 'General Information']
        ])}</ul></sw-section>
        <sw-section heading="SOLIDWORKS Tools" closed></sw-section>
        <sw-section heading="Community" closed></sw-section>
        <sw-section heading="Online Resources"><ul>${links([['shake', 'Partner Solutions'], ['shake', 'Manufacturers']])}</ul></sw-section>
        <sw-section heading="Subscription Services"><ul>${links([['subscription', 'Subscription Services']])}</ul></sw-section>
        <div class="tip">
            <svg viewBox="0 0 31 48" aria-hidden="true">
                <path d="M9 35c0-8-8-11-8-20a14 14 0 0 1 29 0c0 9-7 12-7 20z" fill="#f1f1f1" stroke="#555" stroke-width="1.500"/>
                <path d="M12 34l-2-15c2-4 4 0 3 2h6c-2-3 1-6 3-2l-2 15" fill="none" stroke="#999" stroke-width="1.500"/>
                <path d="M9 35h14v9l-3 3h-8l-3-3z" fill="#555"/><path d="M9 38h14M9 42h14" stroke="#999"/>
            </svg>
            <div>
                <h3>Tip of the Day</h3>
                <p>You can change the order of<br>features by dragging them in the</p>
                <p>FeatureManager design tree.</p>
                <div class="more"><a href="#">Previous Tip</a><a href="#">Next Tip</a></div>
            </div>
        </div>
    </div>`;
});

define('sw-pane-tabs', () => `
    <style>
        :host { display: grid; width: 22px; grid-auto-rows: 20px; border: 1px solid #aaa; border-right: 0; }
        button { display: grid; place-items: center; background: #cfcfcf; border-bottom: 1px solid #999; }
        button:first-child { background: #fbfbfb; }
        button:last-child { border-bottom: 0; }
    </style>
    ${['home', 'library', 'folder', 'palette', 'ball', 'list', 'forum'].map(n => `<button aria-label="${n}">${icon(n, 13)}</button>`).join('')}`);

define('sw-model-tabs', () => `
    <style>
        :host { display: flex; height: 14px; padding-left: 25px; background: #f9f9f9; border-top: 1px solid #bbb; font-size: 11px; color: #333; }
        .nav { display: grid; grid-template-columns: repeat(4, 1fr); width: 54px; background: #8f99a3; border: 1px solid #6f7a84; }
        .nav button { font-size: 8px; line-height: 10px; color: #6c7883; border-right: 1px solid #7b8691; }
        .tab { line-height: 12px; padding: 0 8px; background: #dcdcdc; border: solid #aaa; border-width: 0 1px 1px 0; }
        .tab[aria-selected=true] { padding: 0 7px 0 11px; background: #fbfbfb; border-bottom: 0; font-weight: 700; color: #111; }
    </style>
    <div class="nav"><button aria-label="first">◂</button><button aria-label="previous">◂</button><button aria-label="next">▸</button><button aria-label="last">▸</button></div>
    <button class="tab" role="tab" aria-selected="true">Model</button>
    <button class="tab" role="tab">3D Views</button>
    <button class="tab" role="tab">Motion Study 1</button>`);

define('sw-statusbar', () => `
    <style>
        :host { display: flex; align-items: center; height: 15px; background: #f6f6f6; border-top: 1px solid #aaa; font-size: 10px; color: #666; }
        .state { margin-left: auto; padding-right: 16px; border-right: 1px solid #ddd; }
        .units { padding: 0 10px 0 36px; color: #bbb; }
        sw-caret { margin-right: 72px; }
    </style>
    <span>SOLIDWORKS Premium 2016 x64 Edition</span>
    <span class="state">Fully Defined</span>
    <span class="units">MMGS</span><sw-caret></sw-caret>`);

define('sw-app', () => `
    <style>
        :host { display: flex; flex-direction: column; min-height: 100%; padding: 17px 1px; background: #000; }
        main { flex: 1; display: grid; grid-template-columns: 213px 1fr 200px; grid-template-rows: 1fr auto; background: #f9f9f9; }
        .view { position: relative; display: grid; margin-right: 2px; }
        .right { position: relative; display: grid; grid-row: span 2; }
        sw-model-tabs { grid-column: span 2; }
        sw-pane-tabs { position: absolute; right: 100%; top: 39px; }
        .splitter { position: absolute; left: 0; top: 255px; display: grid; place-items: center; width: 6px; height: 26px; border: 1px solid #aaa; border-left: 0; background: #f4f4f4; }
        .splitter i { width: 3px; height: 3px; border: 1px solid #999; border-radius: 50%; }
    </style>
    <sw-menubar></sw-menubar>
    <sw-configbar></sw-configbar>
    <sw-ribbon></sw-ribbon>
    <main>
        <div><sw-command-tabs></sw-command-tabs><sw-property-manager></sw-property-manager></div>
        <div class="view"><sw-viewport></sw-viewport><div class="splitter"><i></i></div></div>
        <div class="right"><sw-resources></sw-resources><sw-pane-tabs></sw-pane-tabs></div>
        <sw-model-tabs></sw-model-tabs>
    </main>
    <sw-statusbar></sw-statusbar>`);
</script>
</body>
</html>
